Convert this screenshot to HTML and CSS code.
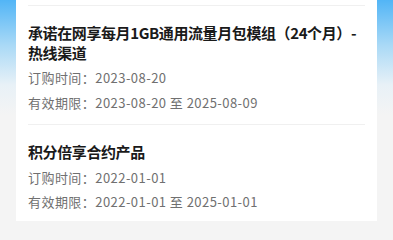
FILE: index.html
```html
<!DOCTYPE html>
<html lang="zh-CN">
<head>
<meta charset="utf-8">
<link rel="stylesheet" href="styles.css">
</head>
<body>
<div class="page">
  <div class="card">
    <div class="item">
      <div class="title">承诺在网享每月1GB通用流量月包模组（24个月）-热线渠道</div>
      <div class="meta">
        <div class="row">订购时间：2023-08-20</div>
        <div class="row">有效期限：2023-08-20 至 2025-08-09</div>
      </div>
    </div>
    <div class="item">
      <div class="title">积分倍享合约产品</div>
      <div class="meta">
        <div class="row">订购时间：2022-01-01</div>
        <div class="row">有效期限：2022-01-01 至 2025-01-01</div>
      </div>
    </div>
  </div>
</div>
</body>
</html>
```
FILE: styles.css
```css
html {
  margin: 0;
  padding: 0;
  height: 221px;
  background-color: #f4f4f4;
  background-image: linear-gradient(to bottom, #52b5f6 0px, #a9d9f6 45px, #e8f1f7 85px, #f4f4f4 115px);
  background-repeat: no-repeat;
  background-size: 100% 221px;
}
body {
  margin: 0;
  padding: 0;
  width: 393px;
  height: 221px;
  overflow: hidden;
  font-family: "Noto Sans CJK SC", "Noto Sans", sans-serif;
}
.page {
  padding: 0 16px;
  height: 100%;
}
.card {
  background: #ffffff;
  padding: 5px 12px 0;
  height: 100%;
  box-sizing: border-box;
}
.item {
  border-top: 1px solid #f0f0f0;
  padding: 17px 0 9px;
}
.item:last-child {
  padding-bottom: 0;
}
.title {
  font-size: 15px;
  line-height: 19.5px;
  font-weight: 700;
  color: #1a1a1a;
  letter-spacing: -0.4px;
}
.meta {
  margin-top: 4px;
}
.row {
  font-size: 13px;
  line-height: 24.5px;
  color: #707070;
  letter-spacing: 0.45px;
}
```
